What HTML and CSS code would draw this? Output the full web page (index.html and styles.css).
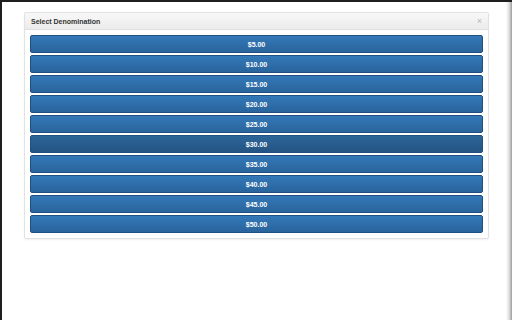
FILE: index.html
```html
<!DOCTYPE html>
<html lang="en">
<head>
  <meta charset="UTF-8" />
  <title>Select Denomination</title>
  <link rel="stylesheet" href="styles.css">
</head>
<body>
  <div class="screen">
    <div class="page">
      <div class="modal">
        <div class="modal-header">
          <h4>Select Denomination</h4>
          <span class="close">&times;</span>
        </div>
        <div class="modal-body">
          <button class="denom">$5.00</button>
          <button class="denom">$10.00</button>
          <button class="denom">$15.00</button>
          <button class="denom">$20.00</button>
          <button class="denom">$25.00</button>
          <button class="denom hover">$30.00</button>
          <button class="denom">$35.00</button>
          <button class="denom">$40.00</button>
          <button class="denom">$45.00</button>
          <button class="denom">$50.00</button>
        </div>
      </div>
    </div>
    <div class="edge"></div>
  </div>
</body>
</html>
```

FILE: styles.css
```css
html, body {
  margin: 0;
  height: 100%;
}

body {
  font-family: "Liberation Sans", Arial, sans-serif;
  background: #fff;
}

.screen {
  display: flex;
  height: 318px;
  border-top: 2px solid #1e1e1e;
  border-left: 2px solid #1e1e1e;
}

.page {
  flex: 1;
  padding: 10px 17px 0 22px;
}

.edge {
  width: 6px;
  background: linear-gradient(to right, #fff, #e6e6e6 40%, #c8c8c8 70%, #9a9a9a);
}

.modal {
  border: 1px solid #e2e2e2;
  border-radius: 2px;
  background: #fff;
  box-shadow: 0 1px 2px rgba(0,0,0,0.06);
}

.modal-header {
  display: flex;
  justify-content: space-between;
  align-items: center;
  height: 16px;
  padding: 0 6px;
  background: linear-gradient(to bottom, #f8f8f8, #ececec);
  border-bottom: 1px solid #e0e0e0;
}

.modal-header h4 {
  margin: 0;
  font-size: 7px;
  font-weight: bold;
  color: #333;
}

.close {
  font-size: 9px;
  color: #b5b5b5;
  line-height: 1;
}

.modal-body {
  display: flex;
  flex-direction: column;
  gap: 2px;
  padding: 5px;
}

.denom {
  height: 18px;
  padding: 0;
  border: 1px solid #1f4f7e;
  border-radius: 2px;
  background: linear-gradient(to bottom, #3378b8, #2a649c);
  color: #fff;
  font-family: "Liberation Sans", Arial, sans-serif;
  font-size: 7px;
  font-weight: bold;
  cursor: pointer;
}

.denom.hover {
  background: linear-gradient(to bottom, #2d6599, #245483);
}
```
